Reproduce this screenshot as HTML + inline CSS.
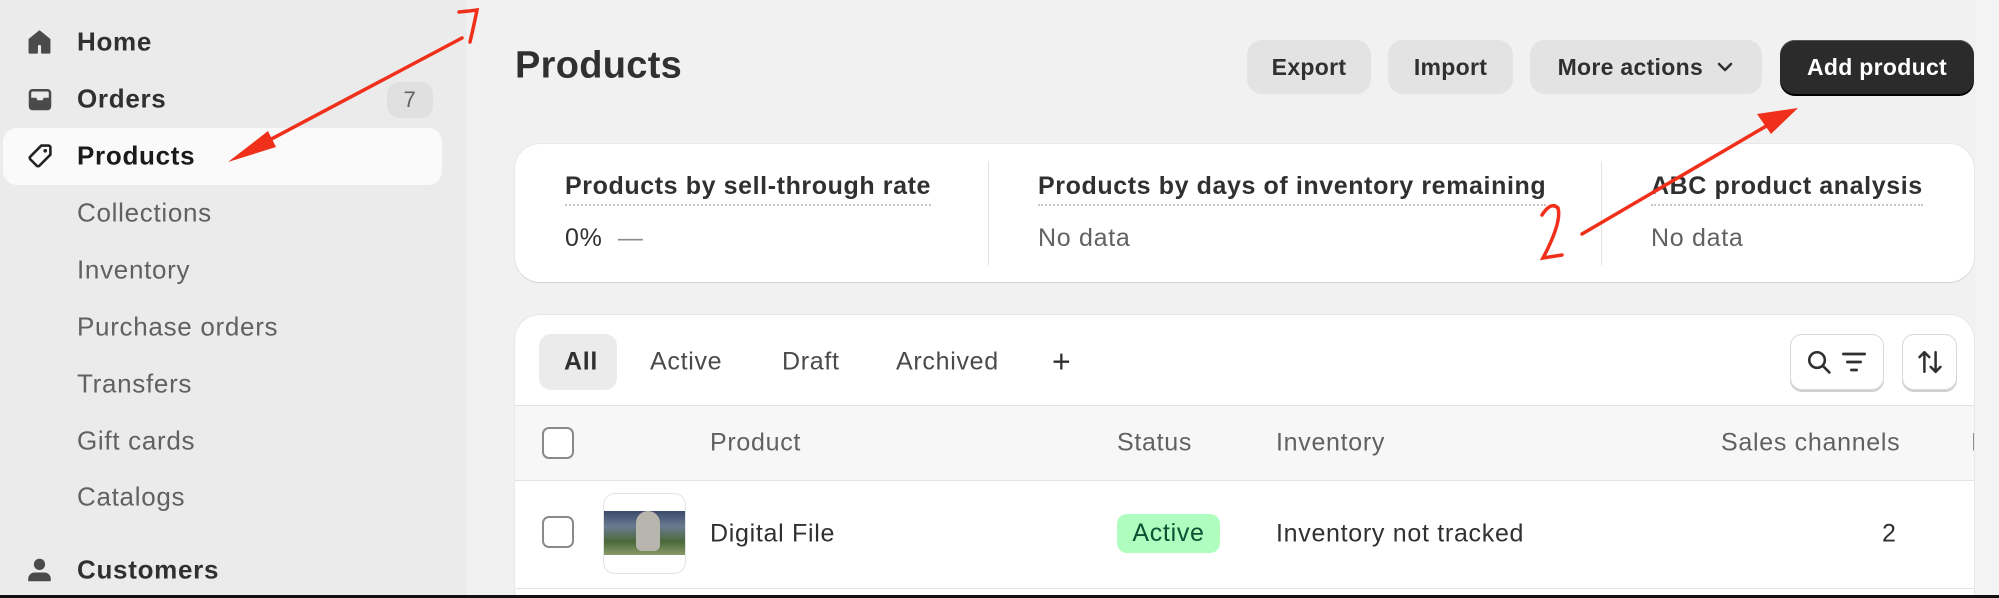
<!DOCTYPE html>
<html><head><meta charset="utf-8"><style>
*{box-sizing:border-box;margin:0;padding:0}
html,body{width:1999px;height:598px;overflow:hidden}
body{background:#f1f1f1;font-family:"Liberation Sans",Arial,sans-serif;color:#303030;position:relative;letter-spacing:0.7px}
.side{position:absolute;left:0;top:0;width:466px;height:598px;background:#ebebeb}
.nav{position:absolute;left:77px;font-size:26px;transform:translateY(-50%);white-space:nowrap}
.main{font-weight:600;color:#303030}
.sub{color:#616161}
.ic{position:absolute;left:27px;transform:translateY(-50%)}
.hl{position:absolute;left:3px;top:128px;width:439px;height:57px;background:#fafafa;border-radius:14px}
.badge{position:absolute;left:387px;top:82px;width:46px;height:36px;background:#e0e0e0;border-radius:12px;font-size:22px;color:#616161;text-align:center;line-height:36px}
.title{position:absolute;left:515px;top:66px;transform:translateY(-50%);font-size:38px;font-weight:700;color:#303030;letter-spacing:0.3px}
.btn{position:absolute;top:40px;height:54px;border-radius:15px;background:#e3e3e3;font-size:23px;font-weight:600;color:#303030;display:flex;align-items:center;justify-content:center;letter-spacing:0.3px}
.card{position:absolute;left:515px;width:1459px;background:#fff;border-radius:25px;box-shadow:0 1px 0 #d4d4d4,0 0 0 1px #e8e8e8}
.st{position:absolute;font-size:25px;font-weight:600;color:#303030;border-bottom:2px dotted #c8c8c8;padding-bottom:3px;white-space:nowrap;letter-spacing:0.6px}
.sv{position:absolute;font-size:25px;color:#616161;white-space:nowrap}
.div{position:absolute;width:1px;background:#e3e3e3}
.t{position:absolute;font-size:25px;white-space:nowrap;transform:translateY(-50%)}
.cb{position:absolute;width:32px;height:32px;border:2px solid #8a8a8a;border-radius:7px;background:#fff}
</style></head><body>
<div class="side"></div>
<div class="hl"></div>
<svg class="ic" style="top:42px" width="25" height="25" viewBox="0 0 20 20"><path d="M10 1.5 2 8v10.5h6v-5a2 2 0 0 1 4 0v5h6V8z" fill="#4a4a4a" stroke="#4a4a4a" stroke-linejoin="round" stroke-width="1.5"/></svg>
<svg class="ic" style="top:99px" width="26" height="25" viewBox="0 0 20 20"><path d="M4 2h12a3 3 0 0 1 3 3v11a3 3 0 0 1-3 3H4a3 3 0 0 1-3-3V5a3 3 0 0 1 3-3z" fill="#4a4a4a"/><path d="M3 9h4l1 2h4l1-2h4V5a1 1 0 0 0-1-1H4a1 1 0 0 0-1 1z" fill="#ebebeb"/></svg>
<svg class="ic" style="top:156px" width="26" height="26" viewBox="0 0 20 20"><path d="M11 2h5.5A1.5 1.5 0 0 1 18 3.5V9l-8.5 8.5a1.5 1.5 0 0 1-2 0l-5-5a1.5 1.5 0 0 1 0-2z" fill="none" stroke="#222" stroke-width="2" stroke-linejoin="round"/><circle cx="14" cy="6" r="1.4" fill="#222"/></svg>
<svg class="ic" style="top:570px" width="25" height="26" viewBox="0 0 20 20"><circle cx="10" cy="5.5" r="4.5" fill="#4a4a4a"/><path d="M1 19v-2a5 5 0 0 1 5-5h8a5 5 0 0 1 5 5v2z" fill="#4a4a4a"/></svg>
<div class="nav main" style="top:42px">Home</div>
<div class="nav main" style="top:99px">Orders</div>
<div class="badge">7</div>
<div class="nav main" style="top:156px;color:#1a1a1a">Products</div>
<div class="nav sub" style="top:213px">Collections</div>
<div class="nav sub" style="top:270px">Inventory</div>
<div class="nav sub" style="top:327px">Purchase orders</div>
<div class="nav sub" style="top:384px">Transfers</div>
<div class="nav sub" style="top:441px">Gift cards</div>
<div class="nav sub" style="top:497px">Catalogs</div>
<div class="nav main" style="top:570px">Customers</div>

<div class="title">Products</div>
<div class="btn" style="left:1247px;width:124px">Export</div>
<div class="btn" style="left:1388px;width:125px">Import</div>
<div class="btn" style="left:1530px;width:232px">More actions&nbsp;&nbsp;<svg width="18" height="12" viewBox="0 0 18 12"><path d="M3 3l6 6 6-6" fill="none" stroke="#303030" stroke-width="2.5" stroke-linecap="round" stroke-linejoin="round"/></svg></div>
<div class="btn" style="left:1780px;width:194px;background:#2b2b2b;color:#fff;box-shadow:inset 0 1px 0 #555,0 2px 0 #000">Add product</div>

<div class="card" style="top:144px;height:138px">
 <div class="st" style="left:50px;top:28px">Products by sell-through rate</div>
 <div class="sv" style="left:50px;top:80px;color:#303030">0% &nbsp;<span style="color:#8a8a8a">—</span></div>
 <div class="div" style="left:473px;top:17px;height:104px"></div>
 <div class="st" style="left:523px;top:28px">Products by days of inventory remaining</div>
 <div class="sv" style="left:523px;top:80px">No data</div>
 <div class="div" style="left:1086px;top:17px;height:104px"></div>
 <div class="st" style="left:1136px;top:28px">ABC product analysis</div>
 <div class="sv" style="left:1136px;top:80px">No data</div>
</div>

<div class="card" style="top:315px;height:300px;overflow:hidden">
 <div style="position:absolute;left:24px;top:19px;width:78px;height:56px;background:#ebebeb;border-radius:12px"></div>
 <div class="t" style="left:49px;top:47px;font-weight:600;color:#303030">All</div>
 <div class="t" style="left:135px;top:47px;color:#4a4a4a">Active</div>
 <div class="t" style="left:267px;top:47px;color:#4a4a4a">Draft</div>
 <div class="t" style="left:381px;top:47px;color:#4a4a4a">Archived</div>
 <div class="t" style="left:537px;top:47px;font-size:32px;color:#303030">+</div>
 <div style="position:absolute;left:1275px;top:19px;width:94px;height:56px;border-radius:12px;border:1px solid #d8d8d8;box-shadow:0 2px 0 #d0d0d0;display:flex;align-items:center;justify-content:center;gap:8px">
  <svg width="26" height="26" viewBox="0 0 20 20"><circle cx="8.5" cy="8.5" r="6" fill="none" stroke="#303030" stroke-width="2"/><path d="M13 13l5 5" stroke="#303030" stroke-width="2" stroke-linecap="round"/></svg>
  <svg width="28" height="24" viewBox="0 0 20 18"><path d="M2 3h16M5 9h10M8 15h4" stroke="#303030" stroke-width="2" stroke-linecap="round"/></svg>
 </div>
 <div style="position:absolute;left:1387px;top:19px;width:55px;height:56px;border-radius:12px;border:1px solid #d8d8d8;box-shadow:0 2px 0 #d0d0d0;display:flex;align-items:center;justify-content:center">
  <svg width="28" height="28" viewBox="0 0 20 20"><path d="M6 17V3M2.5 6.5 6 3l3.5 3.5M14 3v14M10.5 13.5 14 17l3.5-3.5" fill="none" stroke="#303030" stroke-width="1.8" stroke-linecap="round" stroke-linejoin="round"/></svg>
 </div>
 <div style="position:absolute;left:0;top:90px;width:100%;height:76px;background:#f7f7f7;border-top:1px solid #e3e3e3;border-bottom:1px solid #e3e3e3"></div>
 <div class="cb" style="left:27px;top:112px"></div>
 <div class="t" style="left:195px;top:128px;color:#616161">Product</div>
 <div class="t" style="left:602px;top:128px;color:#616161">Status</div>
 <div class="t" style="left:761px;top:128px;color:#616161">Inventory</div>
 <div class="t" style="left:1206px;top:128px;color:#616161">Sales channels</div>
 <div class="t" style="left:1456px;top:128px;color:#616161">I</div>
 <div class="cb" style="left:27px;top:201px"></div>
 <div style="position:absolute;left:88px;top:178px;width:83px;height:81px;border:1px solid #e3e3e3;border-radius:12px;background:#fff;overflow:hidden">
  <div style="position:absolute;left:0;top:17px;width:83px;height:44px;background:linear-gradient(180deg,#3a4a6a 0%,#6a7a90 35%,#4a6a3a 70%,#8a9a6a 100%)"></div>
  <div style="position:absolute;left:32px;top:17px;width:24px;height:40px;border-radius:12px 12px 6px 6px;background:#b8b4ae"></div>
 </div>
 <div class="t" style="left:195px;top:219px;color:#303030">Digital File</div>
 <div style="position:absolute;left:602px;top:199px;width:103px;height:39px;border-radius:10px;background:#affebf;color:#0c5132;font-size:25px;display:flex;align-items:center;justify-content:center">Active</div>
 <div class="t" style="left:761px;top:219px;color:#303030">Inventory not tracked</div>
 <div class="t" style="left:1367px;top:219px;color:#303030">2</div>
 <div style="position:absolute;left:0;top:273px;width:100%;height:1px;background:#e3e3e3"></div>
</div>
<div style="position:absolute;left:1975px;top:0;width:24px;height:598px;background:#f3f3f3"></div>
<div style="position:absolute;left:0;top:595px;width:1999px;height:3px;background:#111"></div>

<svg style="position:absolute;left:0;top:0" width="1999" height="598">
 <g stroke="#f0301a" fill="none" stroke-linecap="round" stroke-width="3.5">
  <path d="M462 38 L245 153"/>
  <path d="M459 12 Q470 11 477 10 Q474 25 470 42"/>
  <path d="M1582 234 L1780 118"/>
  <path d="M1542 215 Q1551 201 1558 208 Q1562 222 1543 258 L1562 255"/>
 </g>
 <path d="M228 162 L268 131 L276 147 Z" fill="#f0301a"/>
 <path d="M1798 108 L1757 114 L1771 134 Z" fill="#f0301a"/>
</svg>
</body></html>
